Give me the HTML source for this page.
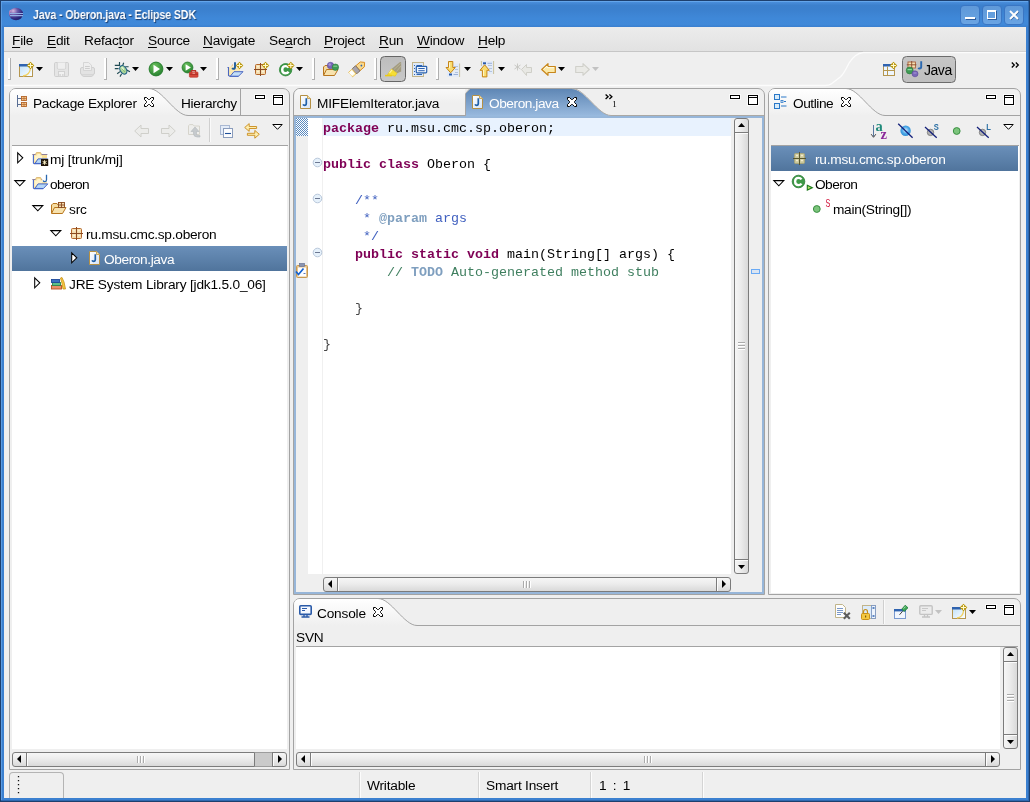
<!DOCTYPE html>
<html><head><meta charset="utf-8"><title>Java - Oberon.java - Eclipse SDK</title>
<style>
*{box-sizing:border-box;margin:0;padding:0}
html,body{width:1030px;height:802px;overflow:hidden}
body{position:relative;background:#efefef;font-family:"Liberation Sans",sans-serif;font-size:13.25px;color:#000}
div,svg{position:absolute}
.t,.m,.code{will-change:transform}
svg{overflow:visible}
u{text-decoration:underline;text-underline-offset:1.5px;text-decoration-thickness:1px}
.t{white-space:nowrap;line-height:16px;height:16px;font-size:13.7px;letter-spacing:-0.2px;margin-top:1px}
.m{white-space:nowrap;line-height:16px;height:16px;font-size:13.7px;letter-spacing:-0.25px;top:33px}
.panel{border:1px solid #a3a3a3;border-radius:7px 7px 0 0;background:#efefef}
.w{background:#fff}
.code{white-space:pre;font-family:"Liberation Mono",monospace;font-size:13.33px;line-height:18px;height:18px;left:323px;color:#000}
.kw{color:#7f0055;font-weight:bold}
.jd{color:#3f5fbf}
.jt{color:#7f9fbf;font-weight:bold}
.td{color:#7f9fbf;font-weight:bold}
.cm{color:#3f7f5f}
.hs{width:1px;background:#fff;border:0}
.hg{width:1px;background:#b4b4b4}
.sbh{height:15px;border:1px solid #7b7b7b;border-radius:3px;background:linear-gradient(#f6f6f6,#ececec 45%,#d9d9d9)}
.sbv{width:15px;border:1px solid #7b7b7b;border-radius:3px;background:linear-gradient(90deg,#f6f6f6,#ececec 45%,#d9d9d9)}
.sel{background:linear-gradient(#6a8fb9,#5d82ab 50%,#50749c)}
</style></head><body>
<div style="left:0;top:0;width:1030px;height:802px;background:#3b80d0"></div>
<div style="left:0;top:0;width:1030px;height:27px;background:linear-gradient(#4a8edc 0,#4a8edc 7%,#3c80cd 20%,#3b80ce 35%,#3f88d8 68%,#4089d9 90%,#3a7fcf 100%)"></div>
<div style="left:0;top:0;width:1030px;height:1px;background:#1d3f6e"></div>
<div style="left:0;top:0;width:1px;height:802px;background:#1d3f6e"></div>
<div style="left:1px;top:1px;width:1px;height:800px;background:#5b9ce2"></div>
<div style="left:1px;top:1px;width:1028px;height:1px;background:#63a5eb"></div>
<div style="left:1029px;top:0;width:1px;height:802px;background:#1d3f6e"></div>
<div style="left:0;top:801px;width:1030px;height:1px;background:#1d3f6e"></div>
<div class="t" style="left:33px;top:6px;font-weight:bold;font-size:12.5px;color:#fff;text-shadow:1px 1px 1px #173a6b;transform-origin:0 0;transform:scaleX(0.86)">Java - Oberon.java - Eclipse SDK</div>
<svg style="left:8px;top:7px" width="16" height="14" viewBox="0 0 16 14" ><defs><radialGradient id="ecl" cx="0.3" cy="0.25" r="0.9"><stop offset="0" stop-color="#d8b8e0"/><stop offset="0.35" stop-color="#6a58a8"/><stop offset="0.7" stop-color="#2f2a80"/><stop offset="1" stop-color="#1a1860"/></radialGradient></defs><ellipse cx="8" cy="7" rx="7" ry="6.2" fill="url(#ecl)"/><path d="M1.5,3.5Q0.5,7 2.5,11.5Q1,7 3,3Z" fill="#f0a0c8" opacity=".8"/><path d="M2,6.5H15M2,8.6H15" stroke="#94b0e4" stroke-width="1.1"/></svg>
<div style="left:959.5px;top:4.5px;width:20px;height:20px;border-radius:4px;background:linear-gradient(#5f99d9,#69a4e3);border:1px solid #3a76c4"></div>
<div style="left:981.5px;top:4.5px;width:20px;height:20px;border-radius:4px;background:linear-gradient(#5f99d9,#69a4e3);border:1px solid #3a76c4"></div>
<div style="left:1003.5px;top:4.5px;width:20px;height:20px;border-radius:4px;background:linear-gradient(#5f99d9,#69a4e3);border:1px solid #3a76c4"></div>
<div style="left:965px;top:17px;width:10px;height:2px;background:#fff;box-shadow:1px 1px 0 #2c5c9c"></div>
<div style="left:987px;top:10px;width:9px;height:9px;border:1px solid #fff;border-top:2px solid #fff;box-shadow:1px 1px 0 #2c5c9c"></div>
<svg style="left:1009px;top:10px" width="10" height="10" viewBox="0 0 10 10" ><path d="M1.5,1.5L9.5,9.5M9.5,1.5L1.5,9.5" stroke="#2c5c9c" stroke-width="2"/><path d="M1,1L9,9M9,1L1,9" stroke="#fff" stroke-width="2"/></svg>
<div style="left:4px;top:27px;width:1022px;height:771px;background:#efefef"></div>
<div style="left:4px;top:27px;width:1022px;height:24px;background:linear-gradient(#ececec,#e2e2e2)"></div>
<div style="left:4px;top:51px;width:1022px;height:1px;background:#c6c6c6"></div>
<div class="m" style="left:12px"><u>F</u>ile</div>
<div class="m" style="left:47px"><u>E</u>dit</div>
<div class="m" style="left:84px">Refac<u>t</u>or</div>
<div class="m" style="left:148px"><u>S</u>ource</div>
<div class="m" style="left:203px"><u>N</u>avigate</div>
<div class="m" style="left:269px">Se<u>a</u>rch</div>
<div class="m" style="left:324px"><u>P</u>roject</div>
<div class="m" style="left:379px"><u>R</u>un</div>
<div class="m" style="left:417px"><u>W</u>indow</div>
<div class="m" style="left:478px"><u>H</u>elp</div>
<div style="left:8px;top:58px;width:2px;height:21px;background:#fff"></div>
<div style="left:10px;top:58px;width:1px;height:22px;background:#b0b0b0"></div>
<div style="left:8px;top:79px;width:2px;height:1px;background:#b0b0b0"></div>
<div style="left:104px;top:58px;width:2px;height:21px;background:#fff"></div>
<div style="left:106px;top:58px;width:1px;height:22px;background:#b0b0b0"></div>
<div style="left:104px;top:79px;width:2px;height:1px;background:#b0b0b0"></div>
<div style="left:216px;top:58px;width:2px;height:21px;background:#fff"></div>
<div style="left:218px;top:58px;width:1px;height:22px;background:#b0b0b0"></div>
<div style="left:216px;top:79px;width:2px;height:1px;background:#b0b0b0"></div>
<div style="left:312px;top:58px;width:2px;height:21px;background:#fff"></div>
<div style="left:314px;top:58px;width:1px;height:22px;background:#b0b0b0"></div>
<div style="left:312px;top:79px;width:2px;height:1px;background:#b0b0b0"></div>
<div style="left:374px;top:58px;width:2px;height:21px;background:#fff"></div>
<div style="left:376px;top:58px;width:1px;height:22px;background:#b0b0b0"></div>
<div style="left:374px;top:79px;width:2px;height:1px;background:#b0b0b0"></div>
<div style="left:436px;top:58px;width:2px;height:21px;background:#fff"></div>
<div style="left:438px;top:58px;width:1px;height:22px;background:#b0b0b0"></div>
<div style="left:436px;top:79px;width:2px;height:1px;background:#b0b0b0"></div>
<svg style="left:19px;top:62px" width="16" height="15" viewBox="0 0 16 15" ><defs><linearGradient id="nw19" x1="0" y1="0" x2="1" y2="1"><stop offset="0" stop-color="#bfe0f8"/><stop offset="1" stop-color="#fff"/></linearGradient></defs><rect x="0.5" y="2.5" width="13" height="12" fill="url(#nw19)" stroke="#b5964f"/><rect x="0" y="2" width="9" height="2.5" fill="#2f63b0"/><path d="M11.5,6Q11,13 4,14" fill="none" stroke="#f0d060" stroke-width="1.3"/><g transform="translate(8,0)"><polygon points="3.5,-0.3 7.3,3.5 3.5,7.3 -0.3,3.5" fill="#b9960b"/><path d="M3.5,0.9V6.1M0.9,3.5H6.1" stroke="#fff8cc" stroke-width="1.15"/></g></svg>
<svg style="left:36px;top:67px" width="7" height="4" viewBox="0 0 7 4" ><polygon points="0,0 7,0 3.5,4" fill="#000"/></svg>
<svg style="left:54px;top:62px" width="15" height="15" viewBox="0 0 15 15" ><rect x="0.5" y="0.5" width="14" height="14" rx="1.2" fill="#e5e5e5" stroke="#cfcfcf"/><path d="M3.3,0.5V6Q3.3,7.3 4.6,7.3H10.4Q11.7,7.3 11.7,6V0.5" fill="#efefef" stroke="#d2d2d2" stroke-width=".9"/><rect x="4.5" y="9.5" width="6" height="5" fill="#f1f1f1" stroke="#d0d0d0" stroke-width=".9"/><rect x="5.3" y="12" width="1.6" height="2.2" fill="#d8d8d8"/><rect x="8" y="12" width="1.6" height="2.2" fill="#d8d8d8"/></svg>
<svg style="left:80px;top:62px" width="15" height="15" viewBox="0 0 15 15" ><rect x="0.5" y="5.5" width="14" height="7" rx="1.5" fill="#e3e3e3" stroke="#cfcfcf"/><path d="M1.5,12.5Q2,14.5 4,14.5H11Q13,14.5 13.5,12.5" fill="#dedede" stroke="#cdcdcd" stroke-width=".9"/><path d="M3.5,8.5V0.5H8.5L11.5,3.2V8.5Z" fill="#eeeeee" stroke="#d2d2d2" stroke-width=".9"/><path d="M5,4.5H9.8M5,6.5H9.8" stroke="#cdcdcd" stroke-width="1"/></svg>
<svg style="left:114px;top:61px" width="17" height="17" viewBox="0 0 17 17" ><path d="M5.5,1V5M9.7,1.8L8.4,5.2M0.8,4.3H5.4M0.8,7.6H4.6M3.2,12.8L6,10.6M6,15.6L7.6,12.8M11.2,5.7H14.6M12.8,9L15.9,10.7" stroke="#1f4a52" stroke-width="1.15" fill="none"/><ellipse cx="9.3" cy="8.9" rx="3.1" ry="4.6" transform="rotate(-32 9.3 8.9)" fill="#a9d59a" stroke="#1c5e84" stroke-width="1.1"/><ellipse cx="8.6" cy="7.6" rx="1.3" ry="2" transform="rotate(-32 8.6 7.6)" fill="#ddf2cc"/><path d="M7.5,7.5L11,11" stroke="#7fb86e" stroke-width=".8"/></svg>
<svg style="left:132px;top:67px" width="7" height="4" viewBox="0 0 7 4" ><polygon points="0,0 7,0 3.5,4" fill="#000"/></svg>
<svg style="left:148px;top:61px" width="16" height="16" viewBox="0 0 16 16" ><defs><radialGradient id="rg1" cx=".4" cy=".3" r=".8"><stop offset="0" stop-color="#6cc25e"/><stop offset="1" stop-color="#1f7a2a"/></radialGradient></defs><circle cx="8" cy="8" r="6.9" fill="url(#rg1)" stroke="#2a8030" stroke-width="1"/><polygon points="5.5,3.8 12,8 5.5,12.2" fill="#fff"/></svg>
<svg style="left:166px;top:67px" width="7" height="4" viewBox="0 0 7 4" ><polygon points="0,0 7,0 3.5,4" fill="#000"/></svg>
<svg style="left:181px;top:61px" width="18" height="17" viewBox="0 0 18 17" ><circle cx="6.5" cy="6.5" r="5.4" fill="url(#rg1)" stroke="#2a8030" stroke-width=".9"/><polygon points="4.6,3.2 9.9,6.5 4.6,9.8" fill="#fff"/><path d="M10.5,11V9.6H14.5V11" fill="none" stroke="#b8342a" stroke-width="1.3"/><rect x="8.4" y="11" width="8.6" height="5.2" rx="0.8" fill="#d5473a" stroke="#c03a2e" stroke-width=".7"/><path d="M8.6,13.2H17" stroke="#a82a22" stroke-width="1"/><path d="M11.5,12.2H14" stroke="#f6b0a8" stroke-width="1"/></svg>
<svg style="left:200px;top:67px" width="7" height="4" viewBox="0 0 7 4" ><polygon points="0,0 7,0 3.5,4" fill="#000"/></svg>
<svg style="left:227px;top:62px" width="17" height="16" viewBox="0 0 17 16" ><path d="M1.5,13.5V6L3,4.5H6.5L7.5,6H13V9.5H7L3.3,14Z" fill="#fbe9b0"/><path d="M4.5,4L6,2.6" stroke="#e8b060" stroke-width="1"/><path d="M0.5,5.5H2M1.5,5.5V13.5L3.2,14.5H11.5" fill="none" stroke="#4a66c0" stroke-width="1.1"/><path d="M3.3,14.2L7,9.7H16L11.5,14.2Z" fill="#c2def8" stroke="#4a66c0" stroke-width="1"/><path d="M8,0.2V5.2Q8,6.8 6.5,6.8Q5.6,6.8 5.1,6.2" fill="none" stroke="#1f5a9a" stroke-width="1.9"/><g transform="translate(9,0)"><polygon points="3.5,-0.3 7.3,3.5 3.5,7.3 -0.3,3.5" fill="#b9960b"/><path d="M3.5,0.9V6.1M0.9,3.5H6.1" stroke="#fff8cc" stroke-width="1.15"/></g></svg>
<svg style="left:254px;top:63px" width="13" height="13" viewBox="0 0 13 13" ><rect x="1.5" y="1.5" width="10" height="10" rx="1" fill="#f3dcae" stroke="#b4662a"/><path d="M6.5,0V13M0,6.5H13" stroke="#8a4a22" stroke-width="1"/><path d="M3,3.5H5M8,3.5H10M3,8.5H5M8,8.5H10" stroke="#fff6dc" stroke-width="1.4" opacity=".8"/></svg>
<svg style="left:262px;top:62px" width="7" height="7" viewBox="0 0 7 7" ><g transform="translate(0,0)"><polygon points="3.5,-0.3 7.3,3.5 3.5,7.3 -0.3,3.5" fill="#b9960b"/><path d="M3.5,0.9V6.1M0.9,3.5H6.1" stroke="#fff8cc" stroke-width="1.15"/></g></svg>
<svg style="left:278px;top:62px" width="17" height="16" viewBox="0 0 17 16" ><circle cx="7.6" cy="7.7" r="6.2" fill="#3c9646" stroke="#2f8a3a" stroke-width=".8"/><path d="M10.6,5.6Q9.5,4.1 7.6,4.1Q4.2,4.1 4.2,7.7Q4.2,11.3 7.6,11.3Q9.5,11.3 10.6,9.8" fill="none" stroke="#fff" stroke-width="2.4"/><g transform="translate(9.3,0)"><polygon points="3.5,-0.3 7.3,3.5 3.5,7.3 -0.3,3.5" fill="#b9960b"/><path d="M3.5,0.9V6.1M0.9,3.5H6.1" stroke="#fff8cc" stroke-width="1.15"/></g></svg>
<svg style="left:296px;top:67px" width="7" height="4" viewBox="0 0 7 4" ><polygon points="0,0 7,0 3.5,4" fill="#000"/></svg>
<svg style="left:323px;top:61px" width="16" height="16" viewBox="0 0 16 16" ><path d="M0.5,14V6L2,4.5H6L7,6H13.5V8" fill="#f5dca0" stroke="#b8761e"/><path d="M0.5,14.5L3.5,8.5H15L11.5,14.5Z" fill="#f7e2ae" stroke="#b8761e"/><circle cx="7.5" cy="4.5" r="3.2" fill="#7a68b8" stroke="#5a489a" stroke-width=".6"/><circle cx="6.7" cy="3.5" r="1.2" fill="#a898d8"/><circle cx="12.4" cy="6.2" r="3.2" fill="#3f9a55" stroke="#2a7a3a" stroke-width=".6"/><path d="M10.3,5.2H14.3" stroke="#8fd09a" stroke-width="1"/></svg>
<svg style="left:348px;top:61px" width="18" height="16" viewBox="0 0 18 16" ><g transform="translate(16.6,1.4) rotate(139) scale(1.0)"><path d="M0,0L3,-3.2H9V3.2H3Z" fill="#f7d88c" stroke="#d88a1c" stroke-width=".9"/><circle cx="4.5" cy="-0.3" r="0.9" fill="#2f63b0"/><path d="M9,-3.4H13L14,-2.4V2.4L13,3.4H9Z" fill="#a8a4ac" stroke="#7a6a58" stroke-width=".8"/><path d="M14,-3H18.5V3H14Z" fill="#fffbd8" stroke="#e8b848" stroke-width=".8"/><path d="M15,-1.5H18.5V2.5H15Z" fill="#fff"/></g></svg>
<div style="left:380px;top:56px;width:26px;height:26px;border:1.4px solid #666;border-radius:4.5px;background:linear-gradient(#bdbdbd,#c8c8c8)"></div>
<svg style="left:385px;top:61px" width="18" height="16" viewBox="0 0 18 16" ><polygon points="6.5,8 15,1 16.2,1.3 16.2,10.5 12,12.2" fill="#a39c80"/><path d="M9,8.5L15.5,2.5M11.5,10.5L16,5" stroke="#b9b298" stroke-width="1"/><polygon points="2.5,13.6 6.5,8 12,12.2 10.2,15.2" fill="#f6de34" stroke="#e3c51c" stroke-width=".6"/><path d="M4.5,12L7,8.8" stroke="#fdf3a0" stroke-width="1.2"/><path d="M0,14.6H7" stroke="#ecca14" stroke-width="1.5"/></svg>
<svg style="left:412px;top:62px" width="16" height="16" viewBox="0 0 16 16" ><rect x="0.5" y="0.5" width="11" height="14" fill="#dfeaf8" stroke="#c2b48a"/><path d="M2,3.5H3M4.5,3.5H10M2,6.5H3M2,9.5H3M2,12.5H3M4.5,12.5H10" stroke="#2f63b0" stroke-width="1.2"/><rect x="4.3" y="4.3" width="10.4" height="6.6" rx="0.8" fill="#eef4fc" stroke="#2a62ae" stroke-width="1.2"/><path d="M6.3,6.5H12.7M6.3,8.7H12.7" stroke="#2f63b0" stroke-width="1"/></svg>
<svg style="left:445px;top:61px" width="16" height="17" viewBox="0 0 16 17" ><rect x="2" y="2.5" width="13" height="13.5" fill="#e3ebf7"/><path d="M14.6,2.5V16" stroke="#c9c29a" stroke-width="1"/><path d="M9,5.5H13M10,8.5H13M10,11.5H13" stroke="#b4c4de" stroke-width="1"/><rect x="4" y="12.5" width="3" height="2" fill="#2a5aa8"/><path d="M8.5,13.5H13" stroke="#9ab0d8"/><path d="M3.5,0.5H7.8V6.5H10.3L5.65,11.8L1,6.5H3.5Z" fill="#f9dc6e" stroke="#c78516" stroke-width="1" stroke-linejoin="round"/><path d="M4.6,1.5V7.2" stroke="#fff8d0" stroke-width="1"/></svg>
<svg style="left:464px;top:67px" width="7" height="4" viewBox="0 0 7 4" ><polygon points="0,0 7,0 3.5,4" fill="#000"/></svg>
<svg style="left:479px;top:61px" width="16" height="17" viewBox="0 0 16 17" ><rect x="2" y="0" width="13" height="13" fill="#e3ebf7"/><path d="M14.6,0V13M2.4,0V5" stroke="#c9c29a" stroke-width="1"/><path d="M9,4.5H13M10,7.5H13M10,10.5H13" stroke="#b4c4de" stroke-width="1"/><rect x="4" y="1.3" width="3" height="2" fill="#2a5aa8"/><path d="M8.5,2.3H13" stroke="#9ab0d8"/><path d="M5.65,3.8L10.3,9.3H7.9V15.9H3.4V9.3H1Z" fill="#f9dc6e" stroke="#c78516" stroke-width="1" stroke-linejoin="round"/><path d="M4.6,15V9" stroke="#fff8d0" stroke-width="1"/></svg>
<svg style="left:498px;top:67px" width="7" height="4" viewBox="0 0 7 4" ><polygon points="0,0 7,0 3.5,4" fill="#000"/></svg>
<svg style="left:514px;top:63px" width="18" height="14" viewBox="0 0 18 14" ><path d="M7.5,6.5L12.5,1.5V4.5H17.5V9.5H12.5V12.5Z" fill="#e8e8e4" stroke="#cfcfc8" stroke-linejoin="round"/><path d="M3.5,0.5V7.5M0.5,2L6.5,6M6.5,2L0.5,6" stroke="#c4c4c0" stroke-width=".9"/></svg>
<svg style="left:541px;top:63px" width="15" height="13" viewBox="0 0 15 13" ><path d="M0.7,6.5L7,0.7V3.5H14.3V9.5H7V12.3Z" fill="#fbe9a8" stroke="#c8861a" stroke-width="1.2" stroke-linejoin="round"/><path d="M2.5,6.3L6,3V4.7H13" stroke="#fffbe6" stroke-width="1" fill="none"/></svg>
<svg style="left:558px;top:67px" width="7" height="4" viewBox="0 0 7 4" ><polygon points="0,0 7,0 3.5,4" fill="#000"/></svg>
<svg style="left:575px;top:63px" width="15" height="13" viewBox="0 0 15 13" ><path d="M14.3,6.5L8,0.7V3.5H0.7V9.5H8V12.3Z" fill="#eaeae6" stroke="#d0d0ca" stroke-width="1.1" stroke-linejoin="round"/></svg>
<svg style="left:592px;top:67px" width="7" height="4" viewBox="0 0 7 4" ><polygon points="0,0 7,0 3.5,4" fill="#c2c2c2"/></svg>
<svg style="left:0;top:0" width="1030" height="100"><path d="M4,85.5 L825,85.5 Q829,85.4 831.5,83.7 L834.4,81.5 L840.6,76.8 Q843.6,73.6 846,69 L849.2,62.8 Q852,58.4 855.4,55.8 Q859,53 863.5,52.5 L1026,52.5" fill="none" stroke="#fcfcfc" stroke-width="1.3" stroke-linejoin="round"/></svg>
<svg style="left:883px;top:61px" width="15" height="15" viewBox="0 0 15 15" ><rect x="0.5" y="3.5" width="11" height="11" fill="#eef6fd" stroke="#b5964f"/><rect x="0" y="3" width="8" height="2.5" fill="#2f63b0"/><path d="M4.5,5.5V14M0.5,9.5H11.5" stroke="#b5964f"/><g transform="translate(7,1)"><polygon points="3.5,-0.3 7.3,3.5 3.5,7.3 -0.3,3.5" fill="#b9960b"/><path d="M3.5,0.9V6.1M0.9,3.5H6.1" stroke="#fff8cc" stroke-width="1.15"/></g></svg>
<div style="left:902px;top:56px;width:54px;height:27px;border:1.3px solid #6c6c6c;border-radius:4.5px;background:linear-gradient(#c6c6c6,#bfbfbf)"></div>
<svg style="left:906px;top:61px" width="17" height="17" viewBox="0 0 17 17" ><rect x="2" y="1" width="7.4" height="6" fill="#f6e2b4" stroke="#a8603a" stroke-width=".9"/><path d="M5.7,0V8M0.8,3.8H10.4" stroke="#8a4a2a" stroke-width=".9"/><circle cx="3.7" cy="9.4" r="3.5" fill="#3f9a55" stroke="#2a7a3a" stroke-width=".6"/><path d="M1.6,8.6H5.8" stroke="#8fd8a0" stroke-width="1.2"/><circle cx="9" cy="12.8" r="3" fill="#7a68b8" stroke="#5a489a" stroke-width=".6"/><path d="M7.5,12H10.5" stroke="#a898dc" stroke-width="1"/><path d="M15.2,0.3V5.8Q15.2,7.5 13.6,7.5Q12.7,7.5 12.3,6.9" fill="none" stroke="#2a68b0" stroke-width="1.9"/></svg>
<div class="t" style="left:924px;top:61px;font-size:14px;letter-spacing:-0.47px">Java</div>
<svg style="left:1011px;top:62px" width="9" height="6" viewBox="0 0 9 6" ><path d="M0.8,0.5L3.3,3L0.8,5.5M4.8,0.5L7.3,3L4.8,5.5" fill="none" stroke="#000" stroke-width="1.3"/></svg>
<div class="panel" style="left:9px;top:88px;width:281px;height:682px"></div>
<div class="panel" style="left:293px;top:88px;width:472px;height:507px"></div>
<div class="panel" style="left:768px;top:88px;width:253px;height:507px"></div>
<div class="panel" style="left:293px;top:598px;width:728px;height:172px"></div>
<svg style="left:0;top:0" width="1030" height="802"><defs><linearGradient id="g1" x1="0" y1="0" x2="0" y2="1"><stop offset="0" stop-color="#fff"/><stop offset="1" stop-color="#efefef"/></linearGradient></defs><path d="M10,116 L10,95 Q10,89 16,89 L149,89 C162.00,89 175.00,115 188,115 L188,116 Z" fill="url(#g1)"/><path d="M149,88.5 C162.00,88.5 175.00,115.5 188,115.5 L289,115.5" fill="none" stroke="#a3a3a3"/></svg>
<div style="left:240px;top:89px;width:1px;height:26px;background:#a3a3a3"></div>
<div style="left:12px;top:145px;width:276px;height:1px;background:#a3a3a3"></div>
<div class="w" style="left:12px;top:146px;width:275px;height:603px"></div>
<div class="t" style="left:33px;top:95px;letter-spacing:-0.27px">Package Explorer</div>
<div class="t" style="left:181px;top:95px;letter-spacing:-0.3px">Hierarchy</div>
<svg style="left:144px;top:97px" width="10" height="10" viewBox="0 0 10 10" ><polygon points="0.5,0.5 2.5,0.5 4.5,2.5 5.5,2.5 7.5,0.5 9.5,0.5 9.5,2.5 7.5,4.5 7.5,5.5 9.5,7.5 9.5,9.5 7.5,9.5 5.5,7.5 4.5,7.5 2.5,9.5 0.5,9.5 0.5,7.5 2.5,5.5 2.5,4.5 0.5,2.5" fill="#fff" stroke="#000" stroke-width="1"/></svg>
<svg style="left:254px;top:94px" width="30" height="12" viewBox="0 0 30 12" ><rect x="0.5" y="0.5" width="11" height="5" fill="none" stroke="#fff" stroke-opacity=".7"/><rect x="1.5" y="1.5" width="9" height="3" fill="#fff" stroke="#000"/><rect x="18.5" y="0.5" width="11" height="11" fill="none" stroke="#fff" stroke-opacity=".7"/><rect x="19.5" y="1.5" width="9" height="9" fill="#fff" stroke="#000"/><line x1="19" y1="3.5" x2="29" y2="3.5" stroke="#000"/></svg>
<div class="sel" style="left:12px;top:246px;width:275px;height:25px"></div>
<div class="t" style="left:50px;top:151px;color:#000;letter-spacing:-0.15px">mj [trunk/mj]</div>
<div class="t" style="left:50px;top:176px;color:#000;letter-spacing:-0.6px">oberon</div>
<div class="t" style="left:69px;top:201px;color:#000;letter-spacing:-0.2px">src</div>
<div class="t" style="left:86px;top:226px;color:#000;letter-spacing:-0.25px">ru.msu.cmc.sp.oberon</div>
<div class="t" style="left:104px;top:251px;color:#fff;letter-spacing:-0.4px">Oberon.java</div>
<div class="t" style="left:69px;top:276px;color:#000;letter-spacing:-0.2px">JRE System Library [jdk1.5.0_06]</div>
<div class="sbh" style="left:12px;top:752px;width:275px"></div>
<div style="left:26px;top:753px;width:1px;height:13px;background:#7b7b7b"></div>
<div style="left:27px;top:753px;width:1px;height:13px;background:#fcfcfc"></div>
<div style="left:272px;top:753px;width:1px;height:13px;background:#7b7b7b"></div>
<div style="left:273px;top:753px;width:1px;height:13px;background:#fcfcfc"></div>
<svg style="left:17px;top:755px" width="4" height="8" viewBox="0 0 4 8" ><polygon points="4,0 4,8 0,4" fill="#000"/></svg>
<svg style="left:278px;top:755px" width="4" height="8" viewBox="0 0 4 8" ><polygon points="0,0 0,8 4,4" fill="#000"/></svg>
<div style="left:254px;top:752px;width:18px;height:15px;background:#cacaca;border-top:1px solid #9c9c9c;border-bottom:1px solid #9c9c9c;border-left:1px solid #7b7b7b"></div>
<svg style="left:137px;top:756px" width="8" height="7" viewBox="0 0 8 7" ><path d="M0.5,0V7M3.5,0V7M6.5,0V7" stroke="#ababab"/><path d="M1.5,0V7M4.5,0V7M7.5,0V7" stroke="#fff"/></svg>
<svg style="left:17px;top:95px" width="10" height="13" viewBox="0 0 10 13" ><path d="M0.5,0V12M0.5,3.5H4M0.5,9.5H4" stroke="#5a6f95" stroke-width="1"/><rect x="4.5" y="1.5" width="5" height="4" fill="#f3c890" stroke="#b4662a" stroke-width=".9"/><path d="M7,1V6M4,3.5H10" stroke="#b4662a" stroke-width=".7"/><rect x="4.5" y="7.5" width="5" height="4" fill="#f3c890" stroke="#b4662a" stroke-width=".9"/><path d="M7,7V12M4,9.5H10" stroke="#b4662a" stroke-width=".7"/></svg>
<svg style="left:134px;top:124px" width="16" height="14" viewBox="0 0 16 14" ><path d="M0.7,7L7,1V4.5H14.5V9.5H7V13Z" fill="#ececea" stroke="#cfcfca" stroke-linejoin="round"/></svg>
<svg style="left:160px;top:124px" width="16" height="14" viewBox="0 0 16 14" ><path d="M15.3,7L9,1V4.5H1.5V9.5H9V13Z" fill="#ececea" stroke="#cfcfca" stroke-linejoin="round"/></svg>
<svg style="left:187px;top:124px" width="15" height="14" viewBox="0 0 15 14" ><path d="M1.5,10.5V1.8L2.6,0.6H6L7.2,2H12.5V10.5Z" fill="#eeeeec" stroke="#d6d4cc"/><path d="M8,3L4,7.5H6.5V10Q6.8,13 10.5,13H13V11.5H11Q9.5,11.5 9.5,10V7.5H12Z" fill="#c6cacd" stroke="#b4b8bc" stroke-width=".6"/></svg>
<div style="left:209px;top:118px;width:1px;height:24px;background:#cfcfcf"></div>
<div style="left:210px;top:118px;width:1px;height:24px;background:#fafafa"></div>
<svg style="left:220px;top:125px" width="14" height="13" viewBox="0 0 14 13" ><rect x="0.5" y="0.5" width="9" height="9" fill="#e4ecf8" stroke="#a9b8d2"/><rect x="3.5" y="3.5" width="9" height="9" fill="#fbfcfe" stroke="#8a9cbc"/><path d="M5,8.5H11" stroke="#1f4f9a" stroke-width="1.1"/></svg>
<svg style="left:244px;top:123px" width="16" height="16" viewBox="0 0 16 16" ><path d="M0.7,4.5L5.2,0.6V3.5H12.6V5.5H5.2V8.4Z" fill="#fdeeb0" stroke="#c88a1a" stroke-width=".9" stroke-linejoin="round"/><path d="M15.3,11.3L10.8,7.4V10.3H3.4V12.3H10.8V15.2Z" fill="#fdeeb0" stroke="#c88a1a" stroke-width=".9" stroke-linejoin="round"/></svg>
<svg style="left:272px;top:124px" width="11" height="6" viewBox="0 0 11 6" ><polygon points="0.8,0.5 10.2,0.5 5.5,5.3" fill="#fff" stroke="#000" stroke-width="1"/></svg>
<svg style="left:17px;top:152px" width="7" height="12" viewBox="0 0 7 12" ><polygon points="0.7,0.8 5.8,5.8 0.7,10.8" fill="#fff" stroke="#000" stroke-width="1.05" stroke-linejoin="miter"/></svg>
<svg style="left:32px;top:152px" width="17" height="15" viewBox="0 0 17 15" ><g transform="translate(0,0)"><path d="M1.5,11.5V2.5H3.5L4.4,0.6H8.6L9.5,2.5H15V7H6.5L3,11.5Z" fill="#fadf96"/><path d="M2.5,10V3.5H5L5.5,2H8L8.5,3.5H10V6.5H6Z" fill="#fef3cc"/><path d="M3.5,2.5L4.4,0.6H8.6L9.5,2.5" fill="none" stroke="#dcb877" stroke-width="1"/><path d="M0.3,2.5H3.5M9.5,2.5H15.4" stroke="#8f7f98" stroke-width="1"/><path d="M1.4,3V11L2.2,11.6H11.2" fill="none" stroke="#4466c8" stroke-width="1.1"/><path d="M3,11.4L6.1,6.9H15.8L11.4,11.5Z" fill="#b6d7f6" stroke="#4466c8" stroke-width="1"/></g><rect x="9" y="7" width="7.2" height="7" fill="#1e1408"/><path d="M12.6,8.2V12.8M10.6,9.3L14.6,11.7M14.6,9.3L10.6,11.7" stroke="#fff6cc" stroke-width="1"/></svg>
<svg style="left:14px;top:180px" width="12" height="7" viewBox="0 0 12 7" ><polygon points="0.8,0.6 10.8,0.6 5.8,5.8" fill="#fff" stroke="#000" stroke-width="1.05"/></svg>
<svg style="left:32px;top:175px" width="17" height="15" viewBox="0 0 17 15" ><g transform="translate(0,2)"><path d="M1.5,11.5V2.5H3.5L4.4,0.6H8.6L9.5,2.5H15V7H6.5L3,11.5Z" fill="#fadf96"/><path d="M2.5,10V3.5H5L5.5,2H8L8.5,3.5H10V6.5H6Z" fill="#fef3cc"/><path d="M3.5,2.5L4.4,0.6H8.6L9.5,2.5" fill="none" stroke="#dcb877" stroke-width="1"/><path d="M0.3,2.5H3.5M9.5,2.5H15.4" stroke="#8f7f98" stroke-width="1"/><path d="M1.4,3V11L2.2,11.6H11.2" fill="none" stroke="#4466c8" stroke-width="1.1"/><path d="M3,11.4L6.1,6.9H15.8L11.4,11.5Z" fill="#b6d7f6" stroke="#4466c8" stroke-width="1"/></g><rect x="10.2" y="-1" width="7" height="8.2" fill="#fff"/><path d="M14.5,-0.2V4.7Q14.5,6.6 12.8,6.6Q11.5,6.6 11.1,5.5" fill="none" stroke="#2a68b0" stroke-width="1.3"/></svg>
<svg style="left:32px;top:205px" width="12" height="7" viewBox="0 0 12 7" ><polygon points="0.8,0.6 10.8,0.6 5.8,5.8" fill="#fff" stroke="#000" stroke-width="1.05"/></svg>
<svg style="left:51px;top:202px" width="16" height="13" viewBox="0 0 16 13" ><path d="M0.5,11V3L2,1.5H6L7,3H12.5V5" fill="#f5dca0" stroke="#b8761e"/><path d="M0.5,11.5L3.5,5.5H15L11.5,11.5Z" fill="#f7e2ae" stroke="#b8761e"/><rect x="7.5" y="0.5" width="6" height="5" fill="#f3dcae" stroke="#8a4a22" stroke-width=".9"/><path d="M10.5,0V6M7,3H14" stroke="#8a4a22" stroke-width=".9"/></svg>
<svg style="left:50px;top:230px" width="12" height="7" viewBox="0 0 12 7" ><polygon points="0.8,0.6 10.8,0.6 5.8,5.8" fill="#fff" stroke="#000" stroke-width="1.05"/></svg>
<svg style="left:70px;top:227px" width="13" height="13" viewBox="0 0 13 13" ><rect x="1.5" y="1.5" width="10" height="10" rx="1" fill="#f3dcae" stroke="#b4662a"/><path d="M6.5,0V13M0,6.5H13" stroke="#8a4a22" stroke-width="1"/><path d="M3,3.5H5M8,3.5H10M3,8.5H5M8,8.5H10" stroke="#fff6dc" stroke-width="1.4" opacity=".8"/></svg>
<svg style="left:71px;top:252px" width="7" height="12" viewBox="0 0 7 12" ><polygon points="0.7,0.8 5.8,5.8 0.7,10.8" fill="#fff" stroke="#000" stroke-width="1.05" stroke-linejoin="miter"/></svg>
<svg style="left:89px;top:251px" width="11" height="14" viewBox="0 0 11 14" ><defs><linearGradient id="jf89_251" x1="0" y1="0" x2="1" y2="1"><stop offset="0" stop-color="#fff"/><stop offset="1" stop-color="#d6e4f6"/></linearGradient></defs><path d="M0.5,0.5H7.5L10.5,3.5V13.5H0.5Z" fill="url(#jf89_251)" stroke="#b49045"/><path d="M7.5,0.5V3.5H10.5" fill="#f3e3b5" stroke="#c9a75a"/><path d="M6.3,3.2V8.6Q6.3,10.3 4.6,10.3Q3.5,10.3 3,9.4" fill="none" stroke="#1f5fa8" stroke-width="1.7"/></svg>
<svg style="left:34px;top:277px" width="7" height="12" viewBox="0 0 7 12" ><polygon points="0.7,0.8 5.8,5.8 0.7,10.8" fill="#fff" stroke="#000" stroke-width="1.05" stroke-linejoin="miter"/></svg>
<svg style="left:51px;top:277px" width="16" height="13" viewBox="0 0 16 13" ><rect x="0.5" y="8.5" width="10" height="3.5" fill="#e8906a" stroke="#b8501e" stroke-width=".9"/><rect x="1.5" y="5.5" width="8" height="3" fill="#5fbf8a" stroke="#2a8a50" stroke-width=".9"/><rect x="0.5" y="2.5" width="8" height="3" fill="#3a70c0" stroke="#1f4a9a" stroke-width=".9"/><path d="M9.5,1L11,0.5L13,5L14.5,12H12L11,6.5Z" fill="#f5c840" stroke="#c89018" stroke-width=".8"/></svg>
<div style="left:294px;top:115px;width:172px;height:1px;background:#a3a3a3"></div>
<div style="left:294px;top:116px;width:470px;height:478px;background:#97b6d9"></div>
<div style="left:296px;top:118px;width:466px;height:474px;background:#efefef"></div>
<div class="w" style="left:308px;top:118px;width:423px;height:456px"></div>
<div style="left:322px;top:118px;width:1px;height:456px;background:#f0f0f0"></div>
<div style="left:323px;top:118px;width:408px;height:18px;background:#e8f2fe"></div>
<div style="left:295px;top:89px;width:170px;height:14px;border-radius:5px 0 0 0;background:linear-gradient(#f9f9f9,#efefef)"></div>
<svg style="left:0;top:0" width="1030" height="802"><defs><linearGradient id="et" x1="0" y1="0" x2="0" y2="1"><stop offset="0" stop-color="#5f87b5"/><stop offset="1" stop-color="#98b9de"/></linearGradient></defs><path d="M466,116 L466,93 L470,89 L572,89 C585.00,89 598.00,115.5 611,115.5 L611,116 Z" fill="url(#et)"/><path d="M465.5,116 L465.5,93.5 L469.5,89" fill="none" stroke="#a6a6a6"/><path d="M572,88.5 C585.00,88.5 598.00,115.5 611,115.5 L764,115.5" fill="none" stroke="#aaa8a4"/><rect x="466" y="115" width="141" height="1.5" fill="#98b9de"/></svg>
<svg style="left:300px;top:95px" width="11" height="14" viewBox="0 0 11 14" ><defs><linearGradient id="jf300_95" x1="0" y1="0" x2="1" y2="1"><stop offset="0" stop-color="#fff"/><stop offset="1" stop-color="#d6e4f6"/></linearGradient></defs><path d="M0.5,0.5H7.5L10.5,3.5V13.5H0.5Z" fill="url(#jf300_95)" stroke="#b49045"/><path d="M7.5,0.5V3.5H10.5" fill="#f3e3b5" stroke="#c9a75a"/><path d="M6.3,3.2V8.6Q6.3,10.3 4.6,10.3Q3.5,10.3 3,9.4" fill="none" stroke="#1f5fa8" stroke-width="1.7"/></svg>
<svg style="left:472px;top:95px" width="11" height="14" viewBox="0 0 11 14" ><defs><linearGradient id="jf472_95" x1="0" y1="0" x2="1" y2="1"><stop offset="0" stop-color="#fff"/><stop offset="1" stop-color="#d6e4f6"/></linearGradient></defs><path d="M0.5,0.5H7.5L10.5,3.5V13.5H0.5Z" fill="url(#jf472_95)" stroke="#b49045"/><path d="M7.5,0.5V3.5H10.5" fill="#f3e3b5" stroke="#c9a75a"/><path d="M6.3,3.2V8.6Q6.3,10.3 4.6,10.3Q3.5,10.3 3,9.4" fill="none" stroke="#1f5fa8" stroke-width="1.7"/></svg>
<svg style="left:567px;top:97px" width="10" height="10" viewBox="0 0 10 10" ><polygon points="0.5,0.5 2.5,0.5 4.5,2.5 5.5,2.5 7.5,0.5 9.5,0.5 9.5,2.5 7.5,4.5 7.5,5.5 9.5,7.5 9.5,9.5 7.5,9.5 5.5,7.5 4.5,7.5 2.5,9.5 0.5,9.5 0.5,7.5 2.5,5.5 2.5,4.5 0.5,2.5" fill="#fff" stroke="#000" stroke-width="1"/></svg>
<svg style="left:605px;top:94px" width="13" height="13" viewBox="0 0 13 13" ><path d="M0.6,0.5L3.1,2.8L0.6,5.1M4.4,0.5L6.9,2.8L4.4,5.1" fill="none" stroke="#000" stroke-width="1.3"/><text x="7.3" y="12.7" font-family="Liberation Serif" font-size="9" fill="#000">1</text></svg>
<div class="t" style="left:317px;top:95px">MIFElemIterator.java</div>
<div class="t" style="left:489px;top:95px;color:#fff;letter-spacing:-0.45px">Oberon.java</div>
<svg style="left:729px;top:94px" width="30" height="12" viewBox="0 0 30 12" ><rect x="0.5" y="0.5" width="11" height="5" fill="none" stroke="#fff" stroke-opacity=".7"/><rect x="1.5" y="1.5" width="9" height="3" fill="#fff" stroke="#000"/><rect x="18.5" y="0.5" width="11" height="11" fill="none" stroke="#fff" stroke-opacity=".7"/><rect x="19.5" y="1.5" width="9" height="9" fill="#fff" stroke="#000"/><line x1="19" y1="3.5" x2="29" y2="3.5" stroke="#000"/></svg>
<div class="code" style="top:120px"><span class="kw">package</span> ru.msu.cmc.sp.oberon;</div>
<div class="code" style="top:156px"><span class="kw">public</span> <span class="kw">class</span> Oberon {</div>
<div class="code" style="top:192px">    <span class="jd">/**</span></div>
<div class="code" style="top:210px">    <span class="jd"> * </span><span class="jt">@param</span><span class="jd"> args</span></div>
<div class="code" style="top:228px">    <span class="jd"> */</span></div>
<div class="code" style="top:246px">    <span class="kw">public</span> <span class="kw">static</span> <span class="kw">void</span> main(String[] args) {</div>
<div class="code" style="top:264px">        <span class="cm">// </span><span class="td">TODO</span><span class="cm"> Auto-generated method stub</span></div>
<div class="code" style="top:300px">    <span style="color:#444">}</span></div>
<div class="code" style="top:336px"><span style="color:#444">}</span></div>
<div class="sbv" style="left:734px;top:118px;height:456px"></div>
<div style="left:735px;top:132px;width:13px;height:1px;background:#7b7b7b"></div>
<div style="left:735px;top:133px;width:13px;height:1px;background:#fcfcfc"></div>
<div style="left:735px;top:560px;width:13px;height:1px;background:#fcfcfc"></div>
<div style="left:735px;top:559px;width:13px;height:1px;background:#7b7b7b"></div>
<svg style="left:738px;top:123px" width="7" height="4" viewBox="0 0 7 4" ><polygon points="0,4 7,4 3.5,0" fill="#000"/></svg>
<svg style="left:738px;top:565px" width="7" height="4" viewBox="0 0 7 4" ><polygon points="0,0 7,0 3.5,4" fill="#000"/></svg>
<svg style="left:738px;top:342px" width="7" height="8" viewBox="0 0 7 8" ><path d="M0,0.5H7M0,3.5H7M0,6.5H7" stroke="#ababab"/><path d="M0,1.5H7M0,4.5H7M0,7.5H7" stroke="#fff"/></svg>
<div class="sbh" style="left:323px;top:577px;width:408px"></div>
<div style="left:337px;top:578px;width:1px;height:13px;background:#7b7b7b"></div>
<div style="left:338px;top:578px;width:1px;height:13px;background:#fcfcfc"></div>
<div style="left:716px;top:578px;width:1px;height:13px;background:#7b7b7b"></div>
<div style="left:717px;top:578px;width:1px;height:13px;background:#fcfcfc"></div>
<svg style="left:328px;top:580px" width="4" height="8" viewBox="0 0 4 8" ><polygon points="4,0 4,8 0,4" fill="#000"/></svg>
<svg style="left:722px;top:580px" width="4" height="8" viewBox="0 0 4 8" ><polygon points="0,0 0,8 4,4" fill="#000"/></svg>
<svg style="left:523px;top:581px" width="8" height="7" viewBox="0 0 8 7" ><path d="M0.5,0V7M3.5,0V7M6.5,0V7" stroke="#ababab"/><path d="M1.5,0V7M4.5,0V7M7.5,0V7" stroke="#fff"/></svg>
<svg style="left:296px;top:118px" width="12" height="18"><defs><pattern id="dz" width="2" height="2" patternUnits="userSpaceOnUse"><rect width="2" height="2" fill="#fff"/><rect width="1" height="1" fill="#5b8abf"/><rect x="1" y="1" width="1" height="1" fill="#5b8abf"/></pattern></defs><rect width="12" height="18" fill="url(#dz)"/></svg>
<svg style="left:312px;top:157px" width="11" height="11" viewBox="0 0 11 11" ><circle cx="5.5" cy="5.5" r="4.3" fill="#e6f1fb" stroke="#b7c6d9" stroke-width="1"/><path d="M3,5.5H8" stroke="#6c7892" stroke-width="1"/></svg>
<svg style="left:312px;top:193px" width="11" height="11" viewBox="0 0 11 11" ><circle cx="5.5" cy="5.5" r="4.3" fill="#e6f1fb" stroke="#b7c6d9" stroke-width="1"/><path d="M3,5.5H8" stroke="#6c7892" stroke-width="1"/></svg>
<svg style="left:312px;top:247px" width="11" height="11" viewBox="0 0 11 11" ><circle cx="5.5" cy="5.5" r="4.3" fill="#e6f1fb" stroke="#b7c6d9" stroke-width="1"/><path d="M3,5.5H8" stroke="#6c7892" stroke-width="1"/></svg>
<svg style="left:296px;top:263px" width="13" height="15" viewBox="0 0 13 15" ><rect x="0.5" y="2.5" width="11" height="12" rx="1" fill="#e8c48a" stroke="#c89850"/><rect x="2" y="4.5" width="8" height="9" fill="#fdfdff"/><rect x="3.5" y="0.5" width="5" height="3" fill="#8a94b0" stroke="#6a7494" stroke-width=".7"/><path d="M0,8.5L2.5,11.5L7.5,5.5" fill="none" stroke="#1060d0" stroke-width="1.7"/><path d="M7.5,10.5H9.5" stroke="#5a78b8" stroke-width="1"/></svg>
<div style="left:751px;top:269px;width:9px;height:5px;border:1px solid #6aaaf5;background:#dbe5f2"></div>
<svg style="left:0;top:0" width="1030" height="802"><defs><linearGradient id="g2" x1="0" y1="0" x2="0" y2="1"><stop offset="0" stop-color="#fff"/><stop offset="1" stop-color="#efefef"/></linearGradient></defs><path d="M769,116 L769,95 Q769,89 775,89 L846,89 C859.00,89 872.00,115 885,115 L885,116 Z" fill="url(#g2)"/><path d="M846,88.5 C859.00,88.5 872.00,115.5 885,115.5 L1020,115.5" fill="none" stroke="#a3a3a3"/></svg>
<div style="left:771px;top:145px;width:248px;height:1px;background:#a3a3a3"></div>
<div class="w" style="left:771px;top:146px;width:248px;height:447px"></div>
<div class="sel" style="left:771px;top:146px;width:247px;height:25px"></div>
<div class="t" style="left:792.5px;top:95px;letter-spacing:-0.45px">Outline</div>
<svg style="left:841px;top:97px" width="10" height="10" viewBox="0 0 10 10" ><polygon points="0.5,0.5 2.5,0.5 4.5,2.5 5.5,2.5 7.5,0.5 9.5,0.5 9.5,2.5 7.5,4.5 7.5,5.5 9.5,7.5 9.5,9.5 7.5,9.5 5.5,7.5 4.5,7.5 2.5,9.5 0.5,9.5 0.5,7.5 2.5,5.5 2.5,4.5 0.5,2.5" fill="#fff" stroke="#000" stroke-width="1"/></svg>
<svg style="left:985px;top:94px" width="30" height="12" viewBox="0 0 30 12" ><rect x="0.5" y="0.5" width="11" height="5" fill="none" stroke="#fff" stroke-opacity=".7"/><rect x="1.5" y="1.5" width="9" height="3" fill="#fff" stroke="#000"/><rect x="18.5" y="0.5" width="11" height="11" fill="none" stroke="#fff" stroke-opacity=".7"/><rect x="19.5" y="1.5" width="9" height="9" fill="#fff" stroke="#000"/><line x1="19" y1="3.5" x2="29" y2="3.5" stroke="#000"/></svg>
<div class="t" style="left:815px;top:151px;color:#fff;letter-spacing:-0.245px">ru.msu.cmc.sp.oberon</div>
<div class="t" style="left:815px;top:176px;letter-spacing:-0.54px">Oberon</div>
<div class="t" style="left:833px;top:201px;letter-spacing:-0.28px">main(String[])</div>
<svg style="left:774px;top:94px" width="13" height="15" viewBox="0 0 13 15" ><rect x="0.5" y="0.5" width="5" height="5" fill="#d8ecfa" stroke="#2a78c8"/><rect x="0.5" y="9.5" width="5" height="5" fill="#d8ecfa" stroke="#2a78c8"/><path d="M7,3H12.5M7,12H12.5M10,7.5H12" stroke="#2a78c8" stroke-width="1"/><rect x="7" y="6.5" width="2" height="2" fill="none" stroke="#2a78c8" stroke-width=".8"/></svg>
<svg style="left:870px;top:123px" width="18" height="17" viewBox="0 0 18 17" ><path d="M3.5,2V13.5" stroke="#5878a0" stroke-width="1"/><path d="M1.2,11.2L3.5,14.3L5.8,11.2" fill="none" stroke="#444" stroke-width="1"/><text x="5.6" y="8" font-family="Liberation Serif" font-weight="bold" font-size="14.5" fill="#1f8a7a">a</text><text x="10.4" y="16" font-family="Liberation Serif" font-weight="bold" font-size="14.5" fill="#8a2a9a">z</text></svg>
<svg style="left:897px;top:123px" width="16" height="16" viewBox="0 0 16 16" ><defs><radialGradient id="hf" cx=".5" cy=".45" r=".6"><stop offset="0" stop-color="#d8f0ff"/><stop offset=".55" stop-color="#4aa8e8"/><stop offset="1" stop-color="#2a88d0"/></radialGradient></defs><circle cx="8.6" cy="7.8" r="5.2" fill="url(#hf)"/><path d="M1.2,0.8L15.6,14.8" stroke="#14207a" stroke-width="1.3"/></svg>
<svg style="left:924px;top:122px" width="16" height="17" viewBox="0 0 16 17" ><circle cx="6.5" cy="10.4" r="3.2" fill="#b4b4b4" stroke="#7c7c7c" stroke-width=".9"/><path d="M1,5L12.7,15.8" stroke="#14207a" stroke-width="1.3"/><text transform="translate(9.8,7.7) scale(0.8,1)" font-family="Liberation Sans" font-weight="bold" font-size="9.5" fill="#2a6fa4">S</text></svg>
<svg style="left:952px;top:126px" width="10" height="10" viewBox="0 0 10 10" ><circle cx="4.7" cy="5" r="3.4" fill="#7cc47c" stroke="#3a8f42" stroke-width="1"/></svg>
<svg style="left:976px;top:122px" width="16" height="17" viewBox="0 0 16 17" ><circle cx="6.5" cy="10.4" r="3.2" fill="#b4b4b4" stroke="#7c7c7c" stroke-width=".9"/><path d="M1,5L12.7,15.8" stroke="#14207a" stroke-width="1.3"/><text transform="translate(10.3,7.7) scale(0.8,1)" font-family="Liberation Sans" font-weight="bold" font-size="9.5" fill="#2a6fa4">L</text></svg>
<svg style="left:1003px;top:124px" width="11" height="6" viewBox="0 0 11 6" ><polygon points="0.8,0.5 10.2,0.5 5.5,5.3" fill="#fff" stroke="#000" stroke-width="1"/></svg>
<svg style="left:793px;top:152px" width="13" height="13" viewBox="0 0 13 13" ><rect x="1.5" y="1.5" width="10" height="10" rx="1" fill="#c9c79c" stroke="#a8a67c"/><path d="M6.5,0V13M0,6.5H13" stroke="#5a582e" stroke-width="1"/><path d="M3,3.5H5M8,3.5H10M3,8.5H5M8,8.5H10" stroke="#fff6dc" stroke-width="1.4" opacity=".8"/></svg>
<svg style="left:773px;top:180px" width="12" height="7" viewBox="0 0 12 7" ><polygon points="0.8,0.6 10.8,0.6 5.8,5.8" fill="#fff" stroke="#000" stroke-width="1.05"/></svg>
<svg style="left:791px;top:174px" width="24" height="17" viewBox="0 0 24 17" ><circle cx="7.5" cy="7.5" r="6.3" fill="#3f9a48" stroke="#2a7a33" stroke-width=".8"/><path d="M10.5,5.4Q9.4,3.9 7.5,3.9Q4.1,3.9 4.1,7.5Q4.1,11.1 7.5,11.1Q9.4,11.1 10.5,9.6" fill="none" stroke="#fff" stroke-width="2.3"/><polygon points="16.3,11.3 21.3,13.7 16.3,16.1" fill="#b4de68" stroke="#1c7a1c" stroke-width="1.1"/></svg>
<svg style="left:811px;top:204px" width="10" height="10" viewBox="0 0 10 10" ><circle cx="5.8" cy="5" r="3.4" fill="#7cc47c" stroke="#3a8f42" stroke-width="1"/></svg>
<svg style="left:825px;top:199px" width="6" height="9" viewBox="0 0 6 9" ><text transform="translate(0.6,8) scale(0.72,1)" font-family="Liberation Sans" font-size="10" fill="#d01038">S</text></svg>
<svg style="left:0;top:0" width="1030" height="802"><defs><linearGradient id="g3" x1="0" y1="0" x2="0" y2="1"><stop offset="0" stop-color="#fff"/><stop offset="1" stop-color="#efefef"/></linearGradient></defs><path d="M294,626 L294,605 Q294,599 300,599 L378,599 C391.00,599 404.00,625 417,625 L417,626 Z" fill="url(#g3)"/><path d="M378,598.5 C391.00,598.5 404.00,625.5 417,625.5 L1020,625.5" fill="none" stroke="#a3a3a3"/></svg>
<div style="left:296px;top:646px;width:722px;height:1px;background:#a3a3a3"></div>
<div class="w" style="left:296px;top:647px;width:704px;height:102px"></div>
<div class="t" style="left:317px;top:605px">Console</div>
<svg style="left:373px;top:607px" width="10" height="10" viewBox="0 0 10 10" ><polygon points="0.5,0.5 2.5,0.5 4.5,2.5 5.5,2.5 7.5,0.5 9.5,0.5 9.5,2.5 7.5,4.5 7.5,5.5 9.5,7.5 9.5,9.5 7.5,9.5 5.5,7.5 4.5,7.5 2.5,9.5 0.5,9.5 0.5,7.5 2.5,5.5 2.5,4.5 0.5,2.5" fill="#fff" stroke="#000" stroke-width="1"/></svg>
<svg style="left:985px;top:604px" width="30" height="12" viewBox="0 0 30 12" ><rect x="0.5" y="0.5" width="11" height="5" fill="none" stroke="#fff" stroke-opacity=".7"/><rect x="1.5" y="1.5" width="9" height="3" fill="#fff" stroke="#000"/><rect x="18.5" y="0.5" width="11" height="11" fill="none" stroke="#fff" stroke-opacity=".7"/><rect x="19.5" y="1.5" width="9" height="9" fill="#fff" stroke="#000"/><line x1="19" y1="3.5" x2="29" y2="3.5" stroke="#000"/></svg>
<div class="t" style="left:296px;top:629px">SVN</div>
<div class="sbv" style="left:1003px;top:647px;height:102px"></div>
<div style="left:1004px;top:661px;width:13px;height:1px;background:#7b7b7b"></div>
<div style="left:1004px;top:662px;width:13px;height:1px;background:#fcfcfc"></div>
<div style="left:1004px;top:735px;width:13px;height:1px;background:#fcfcfc"></div>
<div style="left:1004px;top:734px;width:13px;height:1px;background:#7b7b7b"></div>
<svg style="left:1007px;top:652px" width="7" height="4" viewBox="0 0 7 4" ><polygon points="0,4 7,4 3.5,0" fill="#000"/></svg>
<svg style="left:1007px;top:740px" width="7" height="4" viewBox="0 0 7 4" ><polygon points="0,0 7,0 3.5,4" fill="#000"/></svg>
<svg style="left:1007px;top:694px" width="7" height="8" viewBox="0 0 7 8" ><path d="M0,0.5H7M0,3.5H7M0,6.5H7" stroke="#ababab"/><path d="M0,1.5H7M0,4.5H7M0,7.5H7" stroke="#fff"/></svg>
<div class="sbh" style="left:296px;top:752px;width:704px"></div>
<div style="left:310px;top:753px;width:1px;height:13px;background:#7b7b7b"></div>
<div style="left:311px;top:753px;width:1px;height:13px;background:#fcfcfc"></div>
<div style="left:985px;top:753px;width:1px;height:13px;background:#7b7b7b"></div>
<div style="left:986px;top:753px;width:1px;height:13px;background:#fcfcfc"></div>
<svg style="left:301px;top:755px" width="4" height="8" viewBox="0 0 4 8" ><polygon points="4,0 4,8 0,4" fill="#000"/></svg>
<svg style="left:991px;top:755px" width="4" height="8" viewBox="0 0 4 8" ><polygon points="0,0 0,8 4,4" fill="#000"/></svg>
<svg style="left:644px;top:756px" width="8" height="7" viewBox="0 0 8 7" ><path d="M0.5,0V7M3.5,0V7M6.5,0V7" stroke="#ababab"/><path d="M1.5,0V7M4.5,0V7M7.5,0V7" stroke="#fff"/></svg>
<svg style="left:299px;top:605px" width="13" height="13" viewBox="0 0 13 13" ><rect x="0.8" y="0.8" width="11.4" height="8.6" rx="1" fill="#f4f8ff" stroke="#2a5aa8" stroke-width="1.6"/><path d="M3,3.5H8M3,5.5H6" stroke="#2a5aa8" stroke-width="1"/><path d="M5,10V11.5M8,10V11.5M2.5,12H10.5" stroke="#2a5aa8" stroke-width="1.3"/></svg>
<svg style="left:835px;top:604px" width="16" height="16" viewBox="0 0 16 16" ><path d="M0.5,0.5H7.5L10.5,3.5V13.5H0.5Z" fill="#fdfdfd" stroke="#c0b48a"/><path d="M2,4.5H8M2,6.5H8M2,8.5H8M2,10.5H6" stroke="#7a98c8" stroke-width="1"/><path d="M8.8,8.8L14.8,14.8M14.8,8.8L8.8,14.8" stroke="#5c5c5c" stroke-width="2.1"/></svg>
<svg style="left:861px;top:605px" width="15" height="15" viewBox="0 0 15 15" ><rect x="1.5" y="0.5" width="13" height="13" fill="#dcebfa" stroke="#c2b48a"/><rect x="10.5" y="0.5" width="4" height="13" fill="#eef4fc" stroke="#7e98c0" stroke-width=".9"/><path d="M11.5,3H13.5M11.5,11H13.5" stroke="#2f63b0" stroke-width="1.4"/><path d="M2.5,8.5V7Q2.5,4.5 4.5,4.5Q6.5,4.5 6.5,7V8.5" fill="none" stroke="#c89018" stroke-width="1.2"/><rect x="0.5" y="8.5" width="8" height="6" rx="1" fill="#f5c840" stroke="#c89018"/><rect x="4" y="10.5" width="1.2" height="2" fill="#7a5a10"/></svg>
<div style="left:883px;top:600px;width:1px;height:24px;background:#cfcfcf"></div>
<div style="left:884px;top:600px;width:1px;height:24px;background:#fafafa"></div>
<svg style="left:894px;top:604px" width="15" height="15" viewBox="0 0 15 15" ><rect x="0.5" y="5.5" width="11" height="9" fill="#f1f6fd" stroke="#7a9ad0"/><rect x="0" y="5" width="12" height="2.4" fill="#2f63b0"/><path d="M5.5,10.8L8.6,7.2" stroke="#444" stroke-width="1"/><path d="M7.8,5.2L11.2,1.2L14,3.8L10.2,7.4Z" fill="#3fa858" stroke="#1f7a38" stroke-width=".8"/><path d="M9.6,4.6L11.5,2.6" stroke="#9fe0a8" stroke-width="1"/></svg>
<svg style="left:919px;top:605px" width="14" height="13" viewBox="0 0 14 13" ><rect x="0.8" y="0.8" width="12.4" height="8.6" rx="1" fill="#ececec" stroke="#c4c4c4" stroke-width="1.4"/><path d="M3,3.5H9M3,5.5H7" stroke="#c8c8c8" stroke-width="1"/><path d="M5.5,10V11.5M8.5,10V11.5M3,12H11" stroke="#c4c4c4" stroke-width="1.3"/></svg>
<svg style="left:935px;top:610px" width="7" height="4" viewBox="0 0 7 4" ><polygon points="0,0 7,0 3.5,4" fill="#c2c2c2"/></svg>
<svg style="left:952px;top:604px" width="16" height="15" viewBox="0 0 16 15" ><defs><linearGradient id="nc" x1="0" y1="0" x2="1" y2="1"><stop offset="0" stop-color="#bfe0f8"/><stop offset="1" stop-color="#fff"/></linearGradient></defs><rect x="0.5" y="3.5" width="13" height="11" fill="url(#nc)" stroke="#b5964f"/><rect x="0" y="3" width="9" height="2.5" fill="#2f63b0"/><path d="M11.5,7Q11,13 5,14" fill="none" stroke="#f0d060" stroke-width="1.3"/><g transform="translate(8,0)"><polygon points="3.5,-0.3 7.3,3.5 3.5,7.3 -0.3,3.5" fill="#b9960b"/><path d="M3.5,0.9V6.1M0.9,3.5H6.1" stroke="#fff8cc" stroke-width="1.15"/></g></svg>
<svg style="left:969px;top:610px" width="7" height="4" viewBox="0 0 7 4" ><polygon points="0,0 7,0 3.5,4" fill="#000"/></svg>
<div style="left:9px;top:772px;width:55px;height:27px;border:1px solid #b4b4b4;border-bottom:0;border-radius:4px 4px 0 0;background:#efefef"></div>
<svg style="left:17px;top:776px" width="3" height="18" viewBox="0 0 3 18" ><path d="M1.5,0V18" stroke="#111" stroke-width="1.3" stroke-dasharray="1.3,2.7"/></svg>
<div style="left:359px;top:772px;width:1px;height:26px;background:#d4d4d4"></div>
<div style="left:360px;top:772px;width:1px;height:26px;background:#fcfcfc"></div>
<div style="left:478px;top:772px;width:1px;height:26px;background:#d4d4d4"></div>
<div style="left:479px;top:772px;width:1px;height:26px;background:#fcfcfc"></div>
<div style="left:590px;top:772px;width:1px;height:26px;background:#d4d4d4"></div>
<div style="left:591px;top:772px;width:1px;height:26px;background:#fcfcfc"></div>
<div style="left:702px;top:772px;width:1px;height:26px;background:#d4d4d4"></div>
<div style="left:703px;top:772px;width:1px;height:26px;background:#fcfcfc"></div>
<div class="t" style="left:367px;top:777px">Writable</div>
<div class="t" style="left:486px;top:777px">Smart Insert</div>
<div class="t" style="left:598.5px;top:777px;word-spacing:2.8px">1 : 1</div>
<div style="left:2px;top:798px;width:1027px;height:3px;background:#3b80d0"></div>
<div style="left:1026px;top:27px;width:3px;height:772px;background:#3b80d0"></div>
<div style="left:1028px;top:1px;width:1px;height:800px;background:#2f69b0"></div>
<div style="left:1px;top:800px;width:1028px;height:1px;background:#2f69b0"></div>
</body></html>
